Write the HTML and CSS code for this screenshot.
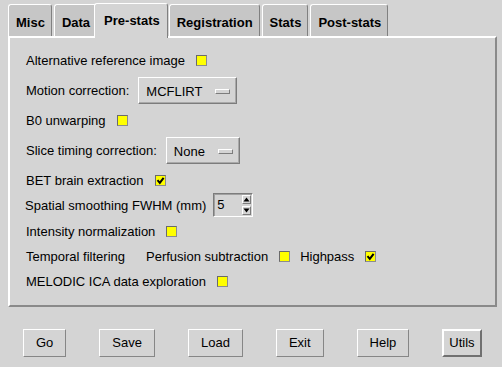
FILE: index.html
```html
<!DOCTYPE html>
<html lang="en">
<head>
    <meta charset="UTF-8">
    <title>FEAT - Pre-stats</title>
    <link rel="stylesheet" href="styles.css">
</head>
<body>
    <div class="tabs">
        <div class="tab">Misc</div>
        <div class="tab">Data</div>
        <div class="tab current">Pre-stats</div>
        <div class="tab">Registration</div>
        <div class="tab">Stats</div>
        <div class="tab">Post-stats</div>
    </div>

    <div class="panel">
        <div class="row first">
            <span>Alternative reference image</span>
            <span class="check"></span>
        </div>
        <div class="row tall">
            <span>Motion correction:</span>
            <span class="menu">MCFLIRT<span class="ind"></span></span>
        </div>
        <div class="row after-menu">
            <span>B0 unwarping</span>
            <span class="check"></span>
        </div>
        <div class="row tall">
            <span>Slice timing correction:</span>
            <span class="menu">None<span class="ind"></span></span>
        </div>
        <div class="row after-menu">
            <span>BET brain extraction</span>
            <span class="check on"><svg viewBox="0 0 9 9"><path d="M1.5 4.2 L3.8 6.8 L7.6 1.8"/></svg></span>
        </div>
        <div class="row spin-row">
            <span>Spatial smoothing FWHM (mm)</span>
            <span class="spin">
                <span class="val">5</span>
                <span class="arrows">
                    <span class="arrow"><svg viewBox="0 0 7 7"><path d="M0.5 5.5 L3.5 1.5 L6.5 5.5 Z"/></svg></span>
                    <span class="arrow"><svg viewBox="0 0 7 7"><path d="M0.5 1.5 L3.5 5.5 L6.5 1.5 Z"/></svg></span>
                </span>
            </span>
        </div>
        <div class="row after-spin">
            <span>Intensity normalization</span>
            <span class="check"></span>
        </div>
        <div class="row">
            <span>Temporal filtering</span>
            <span class="sub">Perfusion subtraction</span>
            <span class="check"></span>
            <span class="sub near">Highpass</span>
            <span class="check on"><svg viewBox="0 0 9 9"><path d="M1.5 4.2 L3.8 6.8 L7.6 1.8"/></svg></span>
        </div>
        <div class="row">
            <span>MELODIC ICA data exploration</span>
            <span class="check"></span>
        </div>
    </div>

    <div class="buttons">
        <span class="btn">Go</span>
        <span class="btn">Save</span>
        <span class="btn">Load</span>
        <span class="btn">Exit</span>
        <span class="btn">Help</span>
        <span class="btn default">Utils</span>
    </div>
</body>
</html>
```

FILE: styles.css
```css
body {
    margin: 0;
    width: 502px;
    height: 367px;
    overflow: hidden;
    background-color: #d4d4d4;
    font-family: "Liberation Sans", Arial, Helvetica, sans-serif;
    font-size: 13px;
    line-height: 15px;
    color: #000;
}

/* tab strip */
.tabs {
    display: flex;
    align-items: flex-end;
    gap: 2px;
    height: 36px;
    padding-left: 8px;
    box-sizing: border-box;
}

.tab {
    position: relative;
    height: 32px;
    box-sizing: border-box;
    padding: 10px 6px 0 7px;
    border: 1px solid;
    border-color: #fff #808080 transparent #fff;
    border-bottom: none;
    border-radius: 3px 3px 0 0;
    background-color: #c6c6c6;
    font-weight: bold;
    white-space: nowrap;
}

.tab.current {
    z-index: 1;
    height: 35px;
    margin: 0 -1px -2px -5px;
    padding: 9px 7px 0 9px;
    background-color: #d4d4d4;
}

/* main frame */
.panel {
    display: flex;
    flex-direction: column;
    height: 271px;
    margin: 0 5px 0 8px;
    padding: 12px 0 0 16px;
    box-sizing: border-box;
    border: 2px solid;
    border-color: #fff #8a8a8a #8a8a8a #fff;
}

.row {
    display: flex;
    align-items: center;
    height: 20px;
    margin-top: 5px;
    white-space: nowrap;
}

.row.first { margin-top: 0; }
.row.tall { height: 27px; margin-top: 7px; }
.row.after-menu { margin-top: 6px; }
.row.spin-row { height: 24px; margin-top: 3px; margin-left: -1px; }
.row.after-spin { margin-top: 4px; }

.check {
    display: inline-block;
    width: 11px;
    height: 11px;
    margin-left: 11px;
    box-sizing: border-box;
    border: 1px solid;
    border-color: #6a6a6a #8c8c8c #8c8c8c #6a6a6a;
    background-color: #ffff00;
}

.check svg {
    display: block;
    width: 9px;
    height: 9px;
}

.check path {
    fill: none;
    stroke: #000;
    stroke-width: 2;
}

.sub { margin-left: 21px; }
.sub.near { margin-left: 10px; }

.menu {
    display: flex;
    align-items: center;
    height: 27px;
    margin-left: 9px;
    padding: 1px 6px 0 7px;
    box-sizing: border-box;
    border: 1px solid;
    border-color: #fff #7c7c7c #7c7c7c #fff;
    box-shadow: inset -1px -1px 0 #a9a9a9;
}

.menu .ind {
    width: 15px;
    height: 5px;
    margin-left: 13px;
    box-sizing: border-box;
    border: 1px solid;
    border-color: #fff #7c7c7c #7c7c7c #fff;
}

.spin {
    display: flex;
    width: 40px;
    height: 24px;
    margin-left: 7px;
    box-sizing: border-box;
    border: 1px solid;
    border-color: #7c7c7c #fff #fff #7c7c7c;
    box-shadow: inset 1px 1px 0 #a0a0a0;
}

.spin .val {
    flex: 1;
    padding-left: 3px;
    line-height: 22px;
}

.arrows {
    display: flex;
    flex-direction: column;
    justify-content: center;
    gap: 2px;
    padding-right: 1px;
}

.arrow {
    display: block;
    width: 9px;
    height: 9px;
    box-sizing: border-box;
    border: 1px solid;
    border-color: #fff #7c7c7c #7c7c7c #fff;
}

.arrow svg {
    display: block;
    width: 7px;
    height: 7px;
}

.arrow path { fill: #000; }

/* bottom buttons */
.buttons {
    display: flex;
    gap: 33px;
    padding: 22px 0 0 23px;
}

.btn {
    height: 28px;
    padding: 0 12px;
    box-sizing: border-box;
    border: 1px solid;
    border-color: #fff #868686 #868686 #fff;
    line-height: 26px;
}

.btn.default {
    padding: 0 5px;
    border-width: 2px;
    border-color: #fff #707070 #707070 #fff;
    line-height: 24px;
}
```
